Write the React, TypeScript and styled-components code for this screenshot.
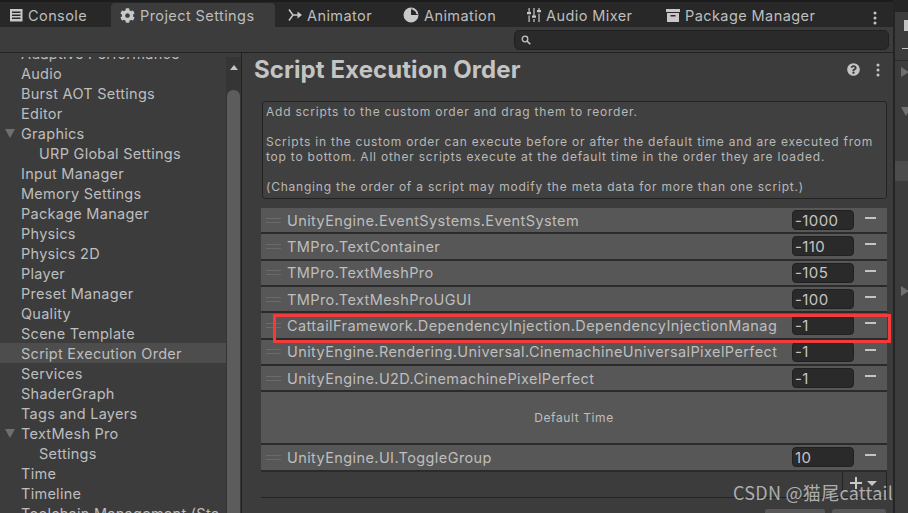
import styled, { createGlobalStyle } from "styled-components";
import { FaCog, FaQuestionCircle } from "react-icons/fa";

const GlobalStyle = createGlobalStyle`
  html, body {
    margin: 0;
    height: 513px;
    overflow: hidden;
    background: #3c3c3c;
  }
  * {
    box-sizing: border-box;
  }
`;

const Screen = styled.div`
  position: relative;
  display: flex;
  width: 908px;
  height: 513px;
  overflow: hidden;
  font-family: Inter, "Liberation Sans", sans-serif;
  color: #bebebe;
`;

const Window = styled.div`
  display: flex;
  flex-direction: column;
  width: 893px;
  height: 513px;
`;

const TabBar = styled.div`
  display: flex;
  flex: none;
  height: 27px;
  padding-top: 4px;
  background: #282828;
  border-top: 2px solid #1c1c1c;
`;

const Tab = styled.div<{ $w: number; $active?: boolean; $ml?: number }>`
  display: flex;
  align-items: center;
  gap: 5px;
  width: ${(p) => p.$w}px;
  margin-left: ${(p) => p.$ml ?? 0}px;
  margin-top: -3px;
  padding-left: 9px;
  font-size: 14.5px;
  letter-spacing: 0.42px;
  color: #bebebe;
  background: ${(p) => (p.$active ? "#3c3c3c" : "transparent")};
  border-radius: 4px 4px 0 0;

  & svg {
    flex: none;
    fill: #c8c8c8;
  }
`;

const TabMenu = styled.div`
  margin-left: auto;
  padding: 3px 16px 0 0;
`;

const Toolbar = styled.div`
  display: flex;
  flex: none;
  justify-content: flex-end;
  align-items: center;
  height: 26px;
  padding-right: 4px;
  background: #3c3c3c;
  border-bottom: 1px solid #232323;
`;

const SearchBox = styled.div`
  display: flex;
  align-items: center;
  width: 375px;
  height: 20px;
  padding-left: 6px;
  background: #2a2a2a;
  border: 1px solid #212121;
  border-radius: 5px;
`;

const Body = styled.div`
  display: flex;
  flex: 1;
  min-height: 0;
`;

const Sidebar = styled.div`
  display: flex;
  flex: none;
  width: 242px;
  padding-top: 4px;
  border-right: 1px solid #232323;
`;

const SideViewport = styled.div`
  flex: 1;
  min-width: 0;
  overflow: hidden;
`;

const SideList = styled.div`
  margin-top: -14px;
`;

const SideRow = styled.div<{ $selected?: boolean }>`
  display: flex;
  align-items: center;
  height: 20px;
  padding-left: 5px;
  font-size: 14.5px;
  letter-spacing: 0.27px;
  white-space: nowrap;
  color: #bebebe;
  background: ${(p) => (p.$selected ? "#4d4d4d" : "transparent")};
`;

const ArrowSlot = styled.span<{ $indent?: boolean }>`
  flex: none;
  display: flex;
  align-items: center;
  width: ${(p) => (p.$indent ? 34 : 16)}px;
`;

const DownArrow = styled.span`
  width: 0;
  height: 0;
  border-left: 5px solid transparent;
  border-right: 5px solid transparent;
  border-top: 9px solid #6f6f6f;
`;

const RightArrow = styled.span`
  display: block;
  width: 0;
  height: 0;
  border-top: 5px solid transparent;
  border-bottom: 5px solid transparent;
  border-left: 8px solid #6f6f6f;
`;

const SideScroll = styled.div`
  display: flex;
  flex-direction: column;
  align-items: center;
  flex: none;
  width: 15px;
  background: #353535;
`;

const UpArrow = styled.span`
  flex: none;
  margin-top: 8px;
  width: 0;
  height: 0;
  border-left: 4px solid transparent;
  border-right: 4px solid transparent;
  border-bottom: 5px solid #c4c4c4;
`;

const Thumb = styled.div`
  flex: 1;
  width: 13px;
  margin-top: 20px;
  background: #5c5c5c;
  border-radius: 6px 6px 0 0;
`;

const Content = styled.div`
  flex: 1;
  min-width: 0;
  display: flex;
  flex-direction: column;

  & > * {
    flex: none;
  }
`;

const TitleRow = styled.div`
  display: flex;
  align-items: center;
  height: 33px;
  padding: 0 13px 0 12px;
`;

const Title = styled.h1`
  margin: 0;
  font-size: 24px;
  font-weight: 700;
  letter-spacing: 0.08px;
  color: #c4c4c4;
`;

const TitleIcons = styled.div`
  display: flex;
  align-items: center;
  gap: 16px;
  margin-left: auto;

  & svg {
    fill: #c4c4c4;
  }
`;

const HelpBox = styled.div`
  height: 98px;
  width: 625px;
  margin: 15px 0 0 20px;
  padding: 2px 3px;
  background: #404040;
  border: 1px solid #232323;
  border-radius: 3px;
  font-size: 12px;
  line-height: 15px;
  letter-spacing: 0.78px;
  white-space: pre-line;
  color: #b8b8b8;
`;

const OrderList = styled.div`
  width: 626px;
  margin: 9px 0 0 19px;
`;

const OrderRow = styled.div`
  display: flex;
  align-items: center;
  height: 26.33px;
  padding-left: 5px;
  background: #575757;
  border-bottom: 2px solid #2b2b2b;
`;

const Grip = styled.span`
  flex: none;
  width: 15px;
  height: 5px;
  margin-right: 6px;
  border-top: 1px solid #6a6a6a;
  border-bottom: 1px solid #6a6a6a;
`;

const ScriptName = styled.span`
  flex: none;
  width: 494px;
  white-space: nowrap;
  font-size: 14.5px;
  letter-spacing: 0.41px;
  color: #bebebe;
`;

const OrderField = styled.div`
  flex: none;
  display: flex;
  align-items: center;
  width: 62px;
  height: 20px;
  margin-left: 11px;
  padding-left: 2px;
  background: #2a2a2a;
  border: 1px solid #212121;
  border-radius: 4px;
  font-size: 15px;
  letter-spacing: 0.4px;
  color: #c4c4c4;
`;

const Minus = styled.span`
  flex: none;
  width: 11px;
  height: 2px;
  margin: 0 0 4px 11px;
  background: #c4c4c4;
`;

const DefaultTime = styled.div`
  display: flex;
  align-items: center;
  justify-content: center;
  height: 53px;
  background: #575757;
  border-bottom: 2px solid #2b2b2b;
  font-size: 12px;
  letter-spacing: 0.62px;
  color: #bebebe;
`;

const ListFooter = styled.div`
  display: flex;
  justify-content: flex-end;
  height: 26px;
  border-bottom: 1px solid #232323;
`;

const AddButton = styled.div`
  display: flex;
  align-items: center;
  gap: 5px;
  width: 45px;
  padding: 0 0 2px 7px;
  border-left: 1px solid #232323;
  border-right: 1px solid #232323;
`;

const PlusSign = styled.span`
  position: relative;
  width: 12px;
  height: 12px;

  &::before,
  &::after {
    content: "";
    position: absolute;
    background: #c8c8c8;
  }
  &::before {
    left: 0;
    top: 5px;
    width: 12px;
    height: 2px;
  }
  &::after {
    left: 5px;
    top: 0;
    width: 2px;
    height: 12px;
  }
`;

const DropArrow = styled.span`
  width: 0;
  height: 0;
  border-left: 5px solid transparent;
  border-right: 5px solid transparent;
  border-top: 5px solid #c4c4c4;
`;

const ButtonRow = styled.div`
  display: flex;
  justify-content: flex-end;
  gap: 7px;
  width: 624px;
  margin: 11px 0 0 20px;
`;

const ActionButton = styled.div<{ $w: number }>`
  width: ${(p) => p.$w}px;
  height: 20px;
  background: #585858;
  border-radius: 3px;
`;

const Divider = styled.div`
  flex: none;
  width: 2px;
  background: #242424;
`;

const DockPanel = styled.div`
  flex: 1;
  min-width: 0;
  display: flex;
  flex-direction: column;
  background: #3c3c3c;

  & > * {
    flex: none;
  }
`;

const DockTop = styled.div`
  height: 12px;
  background: #252525;
`;

const DockHead = styled.div`
  height: 49px;
  padding: 8px 0 0 9px;
  border-bottom: 1px solid #2a2a2a;
`;

const DockSquare = styled.div`
  width: 6px;
  height: 11px;
  background: #c4c4c4;
`;

const DockDash = styled.div`
  width: 8px;
  height: 1px;
  margin: 17px 0 0 -2px;
  background: #c4c4c4;
`;

const DockArrowRow = styled.div<{ $h: number }>`
  display: flex;
  align-items: center;
  height: ${(p) => p.$h}px;
  padding-left: 6px;
`;

const DockHighlight = styled.div`
  height: 20px;
  background: #4c4c4c;
`;

const Highlight = styled.div`
  position: absolute;
  left: 273px;
  top: 314px;
  width: 618px;
  height: 29px;
  border: 3px solid #f43b3b;
`;

const Watermark = styled.div`
  position: absolute;
  left: 733px;
  top: 480px;
  font-family: "Noto Sans CJK SC", "Noto Sans", sans-serif;
  font-size: 18px;
  line-height: 24px;
  letter-spacing: 0.28px;
  white-space: nowrap;
  color: rgba(205, 205, 205, 0.8);
`;

const ConsoleIcon = () => (
  <svg width="13" height="14" viewBox="0 0 13 14">
    <path d="M0 1h12.5v12.5H0zM2 3.5v1.4h8.5V3.5zM2 6.5v1.4h8.5V6.5zM2 9.5v1.4h8.5V9.5z" fillRule="evenodd" />
  </svg>
);

const AnimatorIcon = () => (
  <svg width="14" height="14" viewBox="0 0 14 14">
    <path d="M1 1.5l4 5.5-4 5.5M4.5 7H13" fill="none" stroke="#c8c8c8" strokeWidth="1.5" />
    <path d="M9.5 3.5L14 7l-4.5 3.5z" />
  </svg>
);

const ClockIcon = () => (
  <svg width="16" height="16" viewBox="0 0 16 16">
    <path d="M8 0.5a7.5 7.5 0 1 0 0 15a7.5 7.5 0 0 0 0-15zM8 2.5V8h5.5A5.5 5.5 0 0 0 8 2.5z" fillRule="evenodd" />
    <path d="M8.6 1.6h0.8v5.6h5.6v0.8H8.6z" fill="#282828" />
  </svg>
);

const MixerIcon = () => (
  <svg width="14" height="14" viewBox="0 0 14 14">
    <path d="M1.5 0h1.2v4H4v2.2H0V4h1.5zM1.5 7.5h1.2V14H1.5zM6.4 0h1.2v7.5H9v2.2H5V7.5h1.4zM6.4 11h1.2v3H6.4zM11.4 0h1.2v2H14v2.2h-4V2h1.4zM11.4 5.5h1.2V14h-1.2z" />
  </svg>
);

const PackageIcon = () => (
  <svg width="14" height="13" viewBox="0 0 14 13">
    <path d="M0 0h14v3H0zM1 4h12v9H1zM4.5 6v1.5h5V6z" fillRule="evenodd" />
  </svg>
);

const SearchIcon = () => (
  <svg width="10" height="10" viewBox="0 0 10 10">
    <circle cx="4" cy="4" r="2.8" fill="none" stroke="#c4c4c4" strokeWidth="1.3" />
    <path d="M6 6l3.3 3.3" stroke="#c4c4c4" strokeWidth="1.6" />
  </svg>
);

const Kebab = () => (
  <svg width="4" height="14" viewBox="0 0 4 14">
    <circle cx="2" cy="2" r="1.5" fill="#c4c4c4" />
    <circle cx="2" cy="7" r="1.5" fill="#c4c4c4" />
    <circle cx="2" cy="12" r="1.5" fill="#c4c4c4" />
  </svg>
);

const sideItems = [
  { label: "Adaptive Performance" },
  { label: "Audio" },
  { label: "Burst AOT Settings" },
  { label: "Editor" },
  { label: "Graphics", open: true },
  { label: "URP Global Settings", child: true },
  { label: "Input Manager" },
  { label: "Memory Settings" },
  { label: "Package Manager" },
  { label: "Physics" },
  { label: "Physics 2D" },
  { label: "Player" },
  { label: "Preset Manager" },
  { label: "Quality" },
  { label: "Scene Template" },
  { label: "Script Execution Order", selected: true },
  { label: "Services" },
  { label: "ShaderGraph" },
  { label: "Tags and Layers" },
  { label: "TextMesh Pro", open: true },
  { label: "Settings", child: true },
  { label: "Time" },
  { label: "Timeline" },
  { label: "Toolchain Management (Sta" },
];

const beforeDefault = [
  { name: "UnityEngine.EventSystems.EventSystem", order: "-1000" },
  { name: "TMPro.TextContainer", order: "-110" },
  { name: "TMPro.TextMeshPro", order: "-105" },
  { name: "TMPro.TextMeshProUGUI", order: "-100" },
  { name: "CattailFramework.DependencyInjection.DependencyInjectionManag", order: "-1" },
  { name: "UnityEngine.Rendering.Universal.CinemachineUniversalPixelPerfect", order: "-1" },
  { name: "UnityEngine.U2D.CinemachinePixelPerfect", order: "-1" },
];

const helpText = `Add scripts to the custom order and drag them to reorder.

Scripts in the custom order can execute before or after the default time and are executed from
top to bottom. All other scripts execute at the default time in the order they are loaded.

(Changing the order of a script may modify the meta data for more than one script.)`;

function ScriptRow({ name, order }: { name: string; order: string }) {
  return (
    <OrderRow>
      <Grip />
      <ScriptName>{name}</ScriptName>
      <OrderField>{order}</OrderField>
      <Minus />
    </OrderRow>
  );
}

function App() {
  return (
    <Screen>
      <GlobalStyle />
      <Window>
        <TabBar>
          <Tab $w={110} $ml={1}>
            <ConsoleIcon />
            Console
          </Tab>
          <Tab $w={164} $active>
            <FaCog size={15} />
            Project Settings
          </Tab>
          <Tab $w={115} $ml={4}>
            <AnimatorIcon />
            Animator
          </Tab>
          <Tab $w={124}>
            <ClockIcon />
            Animation
          </Tab>
          <Tab $w={139}>
            <MixerIcon />
            Audio Mixer
          </Tab>
          <Tab $w={170}>
            <PackageIcon />
            Package Manager
          </Tab>
          <TabMenu>
            <Kebab />
          </TabMenu>
        </TabBar>
        <Toolbar>
          <SearchBox>
            <SearchIcon />
          </SearchBox>
        </Toolbar>
        <Body>
          <Sidebar>
            <SideViewport>
              <SideList>
                {sideItems.map((item) => (
                  <SideRow key={item.label} $selected={item.selected}>
                    <ArrowSlot $indent={item.child}>{item.open && <DownArrow />}</ArrowSlot>
                    {item.label}
                  </SideRow>
                ))}
              </SideList>
            </SideViewport>
            <SideScroll>
              <UpArrow />
              <Thumb />
            </SideScroll>
          </Sidebar>
          <Content>
            <TitleRow>
              <Title>Script Execution Order</Title>
              <TitleIcons>
                <FaQuestionCircle size={13} />
                <Kebab />
              </TitleIcons>
            </TitleRow>
            <HelpBox>{helpText}</HelpBox>
            <OrderList>
              {beforeDefault.map((row) => (
                <ScriptRow key={row.name} name={row.name} order={row.order} />
              ))}
              <DefaultTime>Default Time</DefaultTime>
              <ScriptRow name="UnityEngine.UI.ToggleGroup" order="10" />
              <ListFooter>
                <AddButton>
                  <PlusSign />
                  <DropArrow />
                </AddButton>
              </ListFooter>
            </OrderList>
            <ButtonRow>
              <ActionButton $w={60} />
              <ActionButton $w={54} />
            </ButtonRow>
          </Content>
        </Body>
      </Window>
      <Divider />
      <DockPanel>
        <DockTop />
        <DockHead>
          <DockSquare />
          <DockDash />
        </DockHead>
        <DockArrowRow $h={22}>
          <RightArrow />
        </DockArrowRow>
        <DockArrowRow $h={56}>
          <DownArrow />
        </DockArrowRow>
        <DockArrowRow $h={22} />
        <DockHighlight />
        <DockArrowRow $h={220}>
          <RightArrow />
        </DockArrowRow>
      </DockPanel>
      <Highlight />
      <Watermark>CSDN @猫尾cattail</Watermark>
    </Screen>
  );
}

export default App;
